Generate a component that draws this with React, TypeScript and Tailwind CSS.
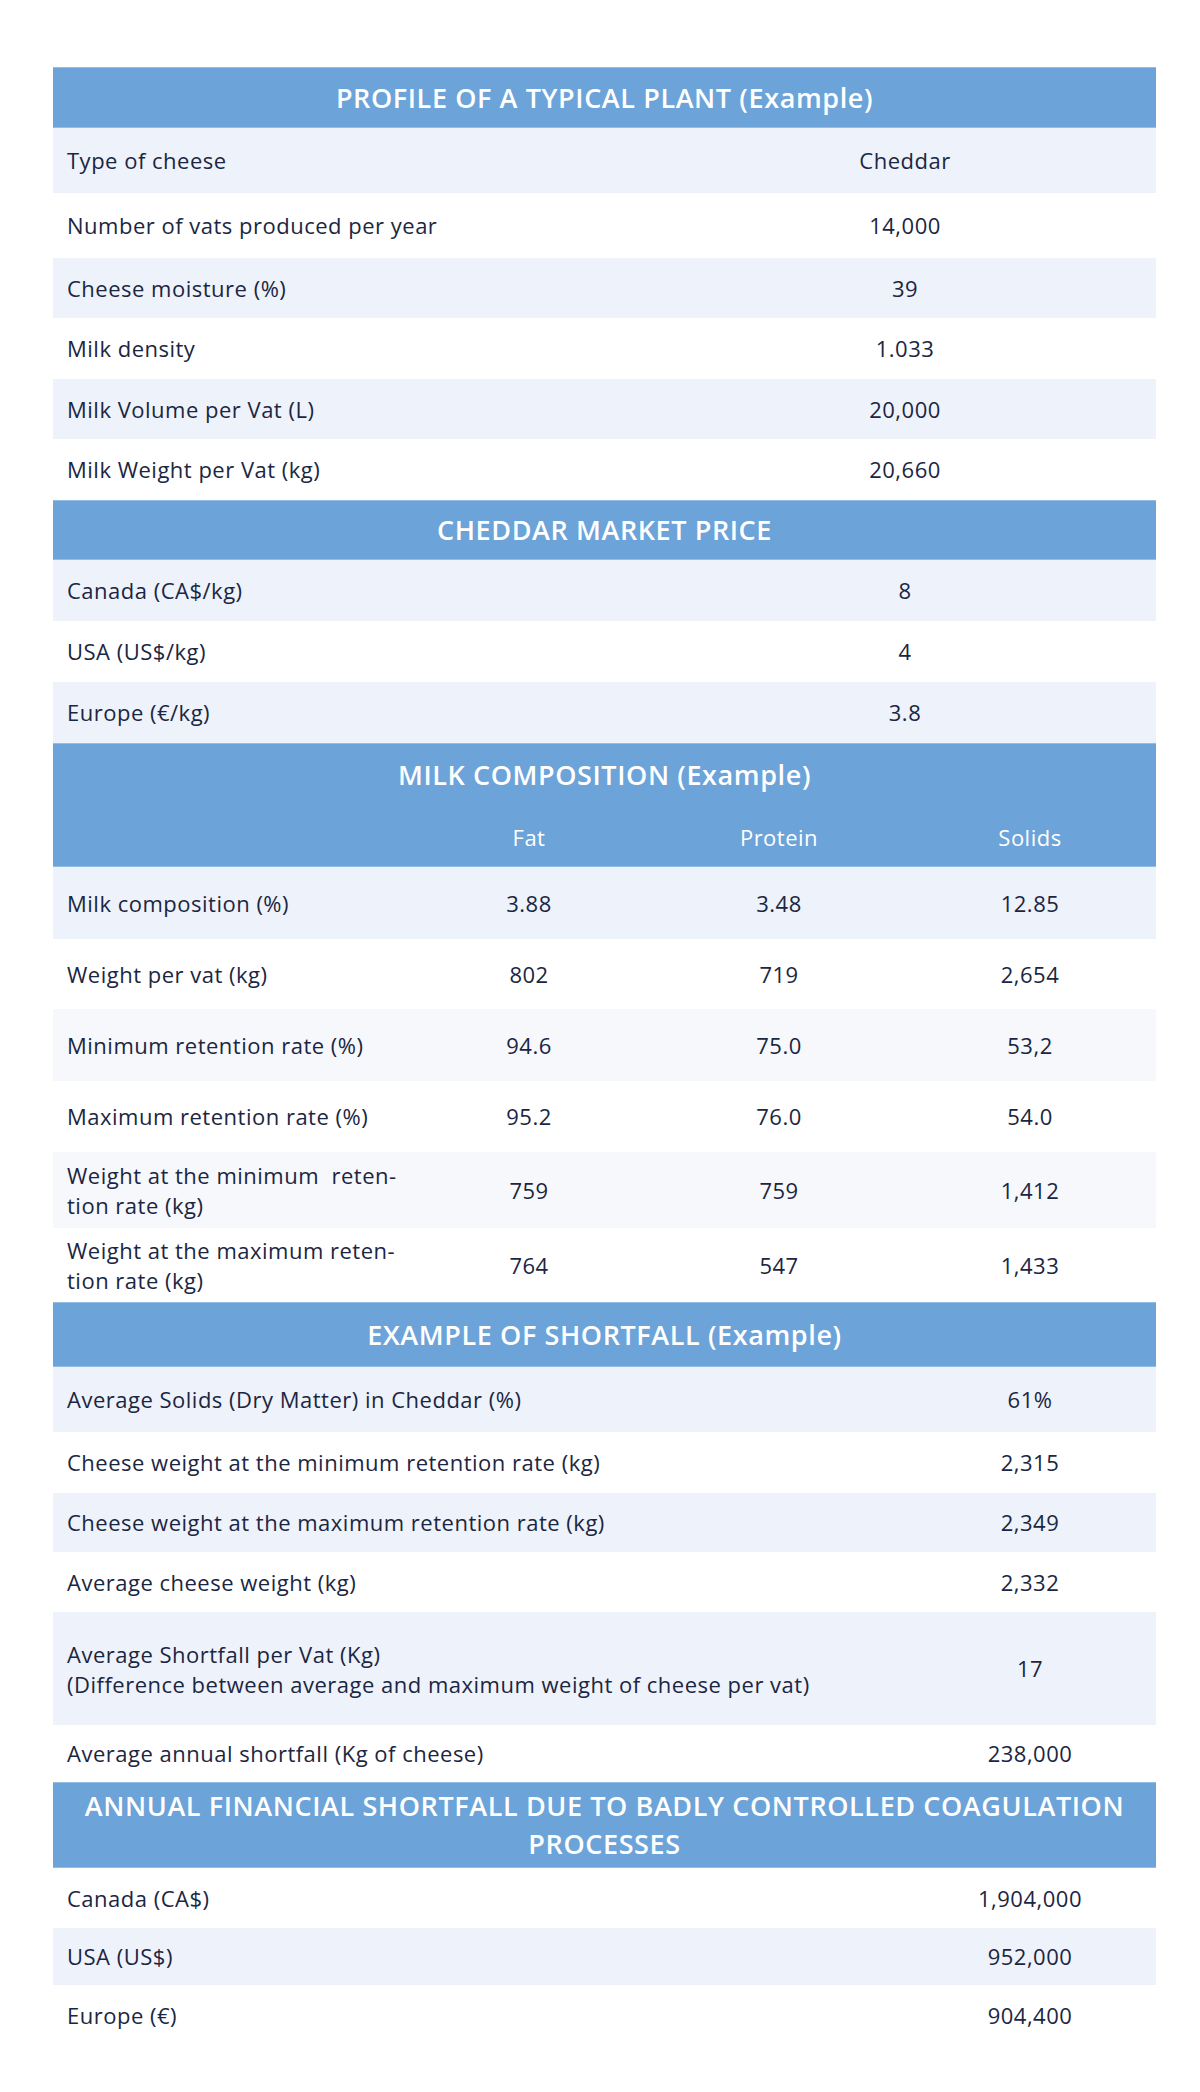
import React from "react"

type Row = { label: React.ReactNode; values: string[]; bg: string; h: string }

const ink = "text-[#1b2642]"

function Header({ title, h }: { title: React.ReactNode; h: string }) {
  return (
    <div
      className={`col-span-4 flex items-center justify-center bg-[#6ca3d8] border-y border-[#94bde6] px-4 text-center text-[27px] font-semibold leading-[38px] tracking-[0.6px] text-white ${h}`}
    >
      {title}
    </div>
  )
}

function DataRow({ row, span }: { row: Row; span: "two" | "one" | "three" }) {
  const cells =
    span === "two" ? (
      <>
        <div className="col-span-2 flex items-center pl-[14px] pr-4">{row.label}</div>
        <div className="col-span-2 flex items-center justify-center">{row.values[0]}</div>
      </>
    ) : span === "one" ? (
      <>
        <div className="col-span-3 flex items-center pl-[14px] pr-4">{row.label}</div>
        <div className="flex items-center justify-center">{row.values[0]}</div>
      </>
    ) : (
      <>
        <div className="flex items-center pl-[14px] pr-2">{row.label}</div>
        {row.values.map((v, i) => (
          <div key={i} className="flex items-center justify-center">
            {v}
          </div>
        ))}
      </>
    )
  return <div className={`col-span-4 grid grid-cols-subgrid ${row.bg} ${row.h}`}>{cells}</div>
}

const L = "bg-[#eef2fa]"
const XL = "bg-[#f6f8fc]"
const W = "bg-white"

const profile: Row[] = [
  { label: "Type of cheese", values: ["Cheddar"], bg: L, h: "h-[65px]" },
  { label: "Number of vats produced per year", values: ["14,000"], bg: W, h: "h-[65px]" },
  { label: "Cheese moisture (%)", values: ["39"], bg: L, h: "h-[60px]" },
  { label: "Milk density", values: ["1.033"], bg: W, h: "h-[61px]" },
  { label: "Milk Volume per Vat (L)", values: ["20,000"], bg: L, h: "h-[60px]" },
  { label: "Milk Weight per Vat (kg)", values: ["20,660"], bg: W, h: "h-[61px]" },
]

const market: Row[] = [
  { label: "Canada (CA$/kg)", values: ["8"], bg: L, h: "h-[61px]" },
  { label: "USA (US$/kg)", values: ["4"], bg: W, h: "h-[61px]" },
  { label: "Europe (€/kg)", values: ["3.8"], bg: L, h: "h-[61px]" },
]

const milk: Row[] = [
  { label: "Milk composition (%)", values: ["3.88", "3.48", "12.85"], bg: L, h: "h-[72px]" },
  { label: "Weight per vat (kg)", values: ["802", "719", "2,654"], bg: W, h: "h-[70px]" },
  { label: "Minimum retention rate (%)", values: ["94.6", "75.0", "53,2"], bg: XL, h: "h-[72px]" },
  { label: "Maximum retention rate (%)", values: ["95.2", "76.0", "54.0"], bg: W, h: "h-[71px]" },
  {
    label: (
      <span className="whitespace-nowrap leading-[30px]">
        Weight at the minimum&nbsp; reten-
        <br />
        tion rate (kg)
      </span>
    ),
    values: ["759", "759", "1,412"],
    bg: XL,
    h: "h-[76px]",
  },
  {
    label: (
      <span className="whitespace-nowrap leading-[30px]">
        Weight at the maximum reten-
        <br />
        tion rate (kg)
      </span>
    ),
    values: ["764", "547", "1,433"],
    bg: W,
    h: "h-[74px]",
  },
]

const shortfall: Row[] = [
  { label: "Average Solids (Dry Matter) in Cheddar (%)", values: ["61%"], bg: L, h: "h-[65px]" },
  { label: "Cheese weight at the minimum retention rate (kg)", values: ["2,315"], bg: W, h: "h-[61px]" },
  { label: "Cheese weight at the maximum retention rate (kg)", values: ["2,349"], bg: L, h: "h-[59px]" },
  { label: "Average cheese weight (kg)", values: ["2,332"], bg: W, h: "h-[60px]" },
  {
    label: (
      <span className="leading-[30px]">
        Average Shortfall per Vat (Kg)
        <br />
        (Difference between average and maximum weight of cheese per vat)
      </span>
    ),
    values: ["17"],
    bg: L,
    h: "h-[113px]",
  },
  { label: "Average annual shortfall (Kg of cheese)", values: ["238,000"], bg: W, h: "h-[57px]" },
]

const annual: Row[] = [
  { label: "Canada (CA$)", values: ["1,904,000"], bg: W, h: "h-[60px]" },
  { label: "USA (US$)", values: ["952,000"], bg: L, h: "h-[57px]" },
  { label: "Europe (€)", values: ["904,400"], bg: W, h: "h-[60px]" },
]

export default function App() {
  return (
    <div
      className={`min-h-[2092px] bg-white pt-[67px] pb-[48px] ${ink} text-[22px] tracking-[0.5px]`}
      style={{ fontFamily: "'Open Sans', Lato, sans-serif" }}
    >
      <div className="ml-[53px] grid w-[1103px] grid-cols-[351px_250px_250px_252px]">
        <Header title="PROFILE OF A TYPICAL PLANT (Example)" h="h-[61px]" />
        {profile.map((r, i) => (
          <DataRow key={i} row={r} span="two" />
        ))}

        <Header title="CHEDDAR MARKET PRICE" h="h-[60px]" />
        {market.map((r, i) => (
          <DataRow key={i} row={r} span="two" />
        ))}

        {/* milk composition header has its own column labels */}
        <div className="col-span-4 grid h-[124px] grid-cols-subgrid grid-rows-[62px_62px] bg-[#6ca3d8] border-y border-[#94bde6] text-white">
          <div className="col-span-4 flex items-center justify-center text-[27px] font-semibold tracking-[0.6px]">
            MILK COMPOSITION (Example)
          </div>
          <div />
          <div className="flex items-center justify-center">Fat</div>
          <div className="flex items-center justify-center">Protein</div>
          <div className="flex items-center justify-center">Solids</div>
        </div>
        {milk.map((r, i) => (
          <DataRow key={i} row={r} span="three" />
        ))}

        <Header title="EXAMPLE OF SHORTFALL (Example)" h="h-[65px]" />
        {shortfall.map((r, i) => (
          <DataRow key={i} row={r} span="one" />
        ))}

        <Header
          title={
            <span className="whitespace-nowrap">
              ANNUAL FINANCIAL SHORTFALL DUE TO BADLY CONTROLLED COAGULATION
              <br />
              PROCESSES
            </span>
          }
          h="h-[86px]"
        />
        {annual.map((r, i) => (
          <DataRow key={i} row={r} span="one" />
        ))}
      </div>
    </div>
  )
}
